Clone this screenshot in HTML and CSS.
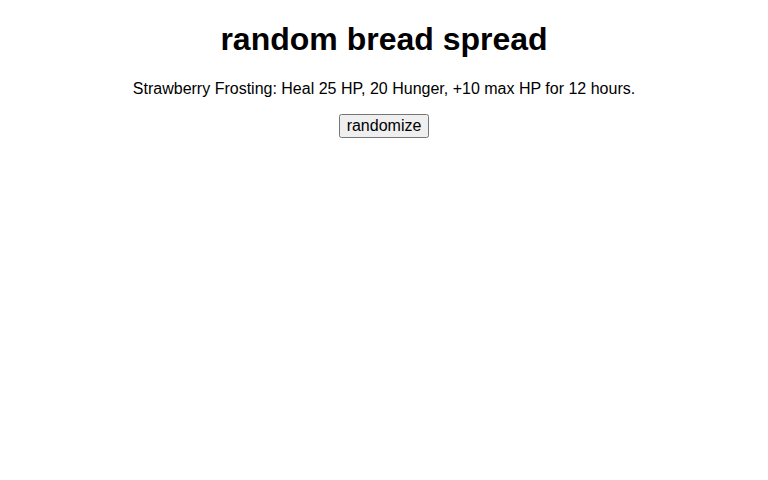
FILE: index.html
```html
<!DOCTYPE html>
<html>
<head>
<meta charset="utf-8">
<title>random bread spread</title>
<link rel="stylesheet" href="styles.css">
</head>
<body class="page">
<h1 class="title">random bread spread</h1>
<p class="result">Strawberry Frosting: Heal 25 HP, 20 Hunger, +10 max HP for 12 hours.</p>
<button class="roll">randomize</button>
</body>
</html>
```
FILE: styles.css
```css
.page {
  margin: 0 8px 8px;
  font-family: "Liberation Sans", Arial, sans-serif;
  text-align: center;
  color: #000;
  background: #fff;
}

.title {
  font-size: 2em;
  font-weight: bold;
}

.result {
  font-size: 16px;
}

.roll {
  font-family: "Liberation Sans", Arial, sans-serif;
  font-size: 16px;
}
```
